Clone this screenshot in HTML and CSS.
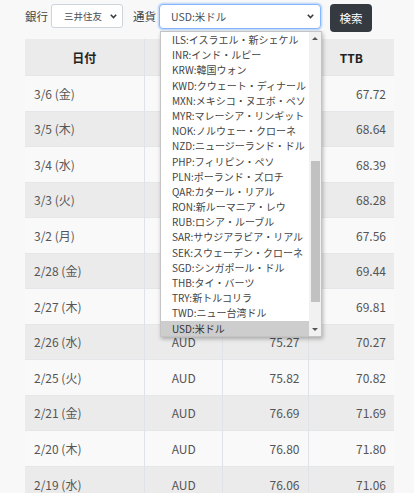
FILE: index.html
```html
<!DOCTYPE html>
<html lang="ja">
<head>
<meta charset="utf-8">
<title>為替レート</title>
<link rel="stylesheet" href="styles.css">
</head>
<body>
<div class="page">
  <form class="search">
    <label class="lbl">銀行</label>
    <div class="select bank"><span>三井住友</span><svg class="chev" width="7" height="5" viewBox="0 0 7 5"><polyline points="0.8,0.8 3.5,3.6 6.2,0.8" fill="none" stroke="#343a40" stroke-width="1.5"/></svg></div>
    <label class="lbl lbl2">通貨</label>
    <div class="select currency"><span>USD:米ドル</span><svg class="chev" width="7" height="5" viewBox="0 0 7 5"><polyline points="0.8,0.8 3.5,3.6 6.2,0.8" fill="none" stroke="#343a40" stroke-width="1.5"/></svg></div>
    <button type="button" class="btn">検索</button>
  </form>

  <table class="rates">
    <colgroup><col class="c1"><col class="c2"><col class="c3"><col class="c4"></colgroup>
    <thead>
      <tr><th>日付</th><th>通貨</th><th>TTS</th><th>TTB</th></tr>
    </thead>
    <tbody>
      <tr><td>3/6 (金)</td><td class="cur">AUD</td><td class="num">72.72</td><td class="num">67.72</td></tr>
      <tr><td>3/5 (木)</td><td class="cur">AUD</td><td class="num">73.64</td><td class="num">68.64</td></tr>
      <tr><td>3/4 (水)</td><td class="cur">AUD</td><td class="num">73.39</td><td class="num">68.39</td></tr>
      <tr><td>3/3 (火)</td><td class="cur">AUD</td><td class="num">73.28</td><td class="num">68.28</td></tr>
      <tr><td>3/2 (月)</td><td class="cur">AUD</td><td class="num">72.56</td><td class="num">67.56</td></tr>
      <tr><td>2/28 (金)</td><td class="cur">AUD</td><td class="num">74.44</td><td class="num">69.44</td></tr>
      <tr><td>2/27 (木)</td><td class="cur">AUD</td><td class="num">74.81</td><td class="num">69.81</td></tr>
      <tr><td>2/26 (水)</td><td class="cur">AUD</td><td class="num">75.27</td><td class="num">70.27</td></tr>
      <tr><td>2/25 (火)</td><td class="cur">AUD</td><td class="num">75.82</td><td class="num">70.82</td></tr>
      <tr><td>2/21 (金)</td><td class="cur">AUD</td><td class="num">76.69</td><td class="num">71.69</td></tr>
      <tr><td>2/20 (木)</td><td class="cur">AUD</td><td class="num">76.80</td><td class="num">71.80</td></tr>
      <tr><td>2/19 (水)</td><td class="cur">AUD</td><td class="num">76.06</td><td class="num">71.06</td></tr>
    </tbody>
  </table>

  <div class="dropdown">
    <ul class="options">
      <li>ILS:イスラエル・新シェケル</li>
      <li>INR:インド・ルピー</li>
      <li>KRW:韓国ウォン</li>
      <li>KWD:クウェート・ディナール</li>
      <li>MXN:メキシコ・ヌエボ・ペソ</li>
      <li>MYR:マレーシア・リンギット</li>
      <li>NOK:ノルウェー・クローネ</li>
      <li>NZD:ニュージーランド・ドル</li>
      <li>PHP:フィリピン・ペソ</li>
      <li>PLN:ポーランド・ズロチ</li>
      <li>QAR:カタール・リアル</li>
      <li>RON:新ルーマニア・レウ</li>
      <li>RUB:ロシア・ルーブル</li>
      <li>SAR:サウジアラビア・リアル</li>
      <li>SEK:スウェーデン・クローネ</li>
      <li>SGD:シンガポール・ドル</li>
      <li>THB:タイ・バーツ</li>
      <li>TRY:新トルコリラ</li>
      <li>TWD:ニュー台湾ドル</li>
      <li class="sel">USD:米ドル</li>
    </ul>
    <div class="scrollbar">
      <span class="arrow up"></span>
      <span class="track"><span class="thumb"></span></span>
      <span class="arrow down"></span>
    </div>
  </div>
</div>
</body>
</html>
```

FILE: styles.css
```css
html, body {
  margin: 0;
  padding: 0;
  background: #ffffff;
}

body {
  font-family: "Noto Sans CJK JP", "Open Sans", sans-serif;
  color: #555;
}

.page {
  position: relative;
  width: 414px;
  height: 493px;
  overflow: hidden;
  background: #f8f8f9;
}

.search {
  display: flex;
  align-items: flex-start;
  padding: 4px 0 0 25px;
  margin: 0;
  height: 39.3px;
  box-sizing: border-box;
}

.lbl {
  font-size: 11.5px;
  line-height: 24px;
  color: #444;
  margin-right: 3px;
}

.lbl2 {
  margin-left: 10px;
}

.select {
  display: flex;
  align-items: center;
  justify-content: space-between;
  box-sizing: border-box;
  background: #fff;
  border: 1px solid #ced4da;
  border-radius: 3px;
  color: #495057;
}

.bank {
  width: 72px;
  height: 24px;
  padding: 0 5px 0 12px;
  font-size: 9.5px;
}

.currency {
  width: 162px;
  height: 25px;
  padding: 0 6px 0 11px;
  font-size: 10.5px;
  border-color: #86b7fe;
  box-shadow: 0 0 0 1.5px rgba(80, 150, 255, 0.28);
  border-radius: 4px;
}

.chev {
  display: block;
}

.btn {
  margin-left: 9px;
  width: 42px;
  height: 28px;
  border: none;
  border-radius: 4px;
  background: #343a40;
  color: #fff;
  font-family: inherit;
  font-size: 11.5px;
  padding: 0;
}

.rates {
  margin-left: 25px;
  width: 369px;
  border-collapse: collapse;
  table-layout: fixed;
  font-size: 12px;
}

.c1 { width: 119px; }
.c2 { width: 78.5px; }
.c3 { width: 85.5px; }
.c4 { width: 86px; }

.rates th {
  height: 36.4px;
  padding: 0 9px;
  background: #ebebec;
  color: #222;
  font-weight: bold;
  text-align: center;
  box-sizing: border-box;
}

.rates td {
  height: 35.5px;
  padding: 0 8px 0 9px;
  box-sizing: border-box;
  color: #555;
  border-top: 1px solid #e4e6e9;
}

.rates th + th,
.rates td + td {
  border-left: 1px solid #dfe3e7;
}

.rates tbody tr:nth-child(odd) td {
  background: #f9f9f9;
}

.rates tbody tr:nth-child(even) td {
  background: #ebebeb;
}

.rates .cur {
  text-align: center;
}

.rates .num {
  text-align: right;
}

.dropdown {
  position: absolute;
  left: 160px;
  top: 31px;
  width: 162px;
  height: 306px;
  box-sizing: border-box;
  background: #fff;
  border: 1px solid #c4c4c4;
  box-shadow: 1px 2px 4px rgba(0, 0, 0, 0.28);
  display: flex;
}

.options {
  list-style: none;
  margin: 0;
  padding: 0;
  flex: 1;
}

.options li {
  height: 15.2px;
  line-height: 15.2px;
  padding-left: 11px;
  font-size: 10px;
  color: #444;
  white-space: nowrap;
}

.options li.sel {
  background: #cdcdcd;
  color: #333;
}

.scrollbar {
  width: 12px;
  background: #f1f1f1;
  display: flex;
  flex-direction: column;
  align-items: center;
}

.arrow {
  width: 0;
  height: 0;
  border-left: 3px solid transparent;
  border-right: 3px solid transparent;
  margin: 5px 0;
}

.arrow.up {
  border-bottom: 3px solid #555;
}

.arrow.down {
  border-top: 3px solid #555;
}

.track {
  flex: 1;
  width: 100%;
  display: flex;
  flex-direction: column;
  justify-content: flex-end;
  align-items: center;
}

.thumb {
  width: 9px;
  height: 141px;
  margin-bottom: 21px;
  background: #c1c1c1;
}
```
